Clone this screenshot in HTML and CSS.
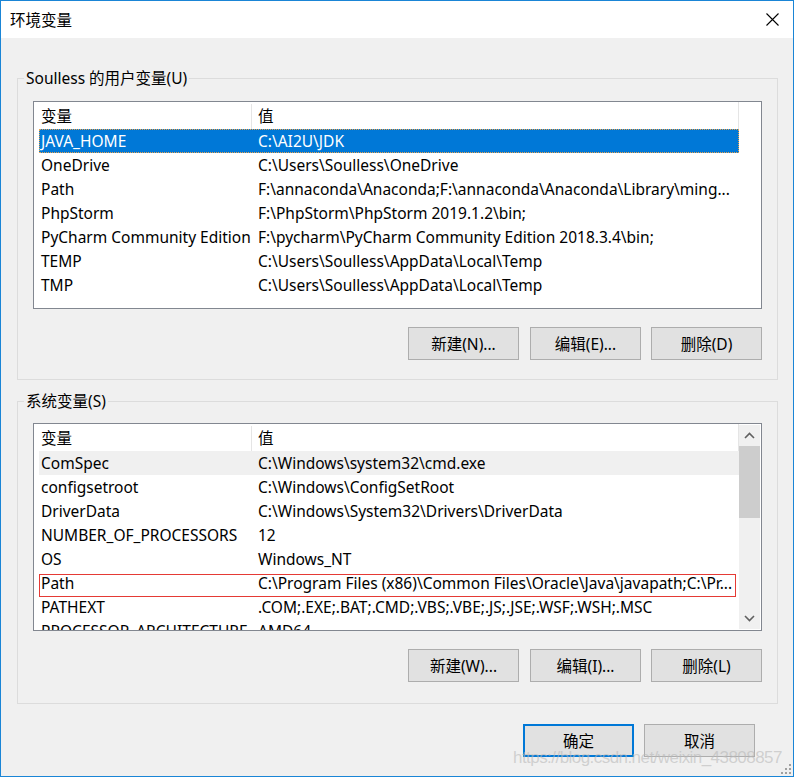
FILE: index.html
```html
<!DOCTYPE html>
<html lang="zh-CN">
<head>
    <meta charset="UTF-8">
    <title>环境变量</title>
    <link rel="stylesheet" href="styles.css">
</head>
<body>
<div class="window">
    <div class="titlebar">
        <span class="title">环境变量</span>
        <svg class="close" width="13" height="13" viewBox="0 0 13 13">
            <path d="M0.5 0.5 L12.5 12.5 M12.5 0.5 L0.5 12.5" stroke="#000" stroke-width="1.1" fill="none"/>
        </svg>
    </div>

    <div class="content">
        <fieldset class="group group-user">
            <legend>Soulless 的用户变量(U)</legend>
            <div class="list">
                <div class="rows">
                    <div class="row head"><span>变量</span><span>值</span></div>
                    <div class="row selected"><span>JAVA_HOME</span><span>C:\AI2U\JDK</span></div>
                    <div class="row"><span>OneDrive</span><span>C:\Users\Soulless\OneDrive</span></div>
                    <div class="row"><span>Path</span><span>F:\annaconda\Anaconda;F:\annaconda\Anaconda\Library\ming...</span></div>
                    <div class="row"><span>PhpStorm</span><span>F:\PhpStorm\PhpStorm 2019.1.2\bin;</span></div>
                    <div class="row"><span>PyCharm Community Edition</span><span>F:\pycharm\PyCharm Community Edition 2018.3.4\bin;</span></div>
                    <div class="row"><span>TEMP</span><span>C:\Users\Soulless\AppData\Local\Temp</span></div>
                    <div class="row"><span>TMP</span><span>C:\Users\Soulless\AppData\Local\Temp</span></div>
                </div>
            </div>
            <div class="actions">
                <button>新建(N)...</button>
                <button>编辑(E)...</button>
                <button>删除(D)</button>
            </div>
        </fieldset>

        <fieldset class="group group-system">
            <legend>系统变量(S)</legend>
            <div class="list">
                <div class="rows">
                    <div class="row head"><span>变量</span><span>值</span></div>
                    <div class="row hover"><span>ComSpec</span><span>C:\Windows\system32\cmd.exe</span></div>
                    <div class="row"><span>configsetroot</span><span>C:\Windows\ConfigSetRoot</span></div>
                    <div class="row"><span>DriverData</span><span>C:\Windows\System32\Drivers\DriverData</span></div>
                    <div class="row"><span>NUMBER_OF_PROCESSORS</span><span>12</span></div>
                    <div class="row"><span>OS</span><span>Windows_NT</span></div>
                    <div class="row marked"><span>Path</span><span>C:\Program Files (x86)\Common Files\Oracle\Java\javapath;C:\Pr...</span></div>
                    <div class="row"><span>PATHEXT</span><span>.COM;.EXE;.BAT;.CMD;.VBS;.VBE;.JS;.JSE;.WSF;.WSH;.MSC</span></div>
                    <div class="row"><span>PROCESSOR_ARCHITECTURE</span><span>AMD64</span></div>
                </div>
                <div class="scrollbar">
                    <div class="arrow">
                        <svg width="11" height="7" viewBox="0 0 11 7"><path d="M1 6 L5.5 1.5 L10 6" stroke="#606060" stroke-width="1.6" fill="none"/></svg>
                    </div>
                    <div class="thumb"></div>
                    <div class="track"></div>
                    <div class="arrow">
                        <svg width="11" height="7" viewBox="0 0 11 7"><path d="M1 1 L5.5 5.5 L10 1" stroke="#606060" stroke-width="1.6" fill="none"/></svg>
                    </div>
                </div>
            </div>
            <div class="actions">
                <button>新建(W)...</button>
                <button>编辑(I)...</button>
                <button>删除(L)</button>
            </div>
        </fieldset>

        <div class="footer">
            <button class="default">确定</button>
            <button>取消</button>
        </div>
    </div>

    <div class="watermark">https://blog.csdn.net/weixin_43808857</div>
    <svg class="grip" width="10" height="10" viewBox="0 0 10 10">
        <rect x="8" y="0" width="2" height="2" fill="#a0a0a0"/>
        <rect x="4" y="4" width="2" height="2" fill="#a0a0a0"/>
        <rect x="8" y="4" width="2" height="2" fill="#a0a0a0"/>
        <rect x="0" y="8" width="2" height="2" fill="#a0a0a0"/>
        <rect x="4" y="8" width="2" height="2" fill="#a0a0a0"/>
        <rect x="8" y="8" width="2" height="2" fill="#a0a0a0"/>
    </svg>
</div>
</body>
</html>
```

FILE: styles.css
```css
body {
    margin: 0;
    font-family: "Noto Sans", "Noto Sans CJK SC", sans-serif;
    font-size: 15.5px;
    color: #000;
    background-color: #f0f0f0;
}
.window {
    position: relative;
    width: 794px;
    height: 777px;
    box-sizing: border-box;
    border: 1px solid #1a85d6;
    background-color: #f0f0f0;
    overflow: hidden;
}
.titlebar {
    height: 37px;
    background-color: #fff;
    display: flex;
    align-items: center;
    justify-content: space-between;
    padding: 0 14px 0 9px;
}
.title {
    line-height: 20px;
}
.close {
    display: block;
}

.content {
    padding: 0 15px 0 16px;
}
.group {
    margin: 0;
    border: 1px solid #dcdcdc;
    padding: 13px 15px 19px 15px;
}
.group legend {
    line-height: 20px;
    padding: 0 2px;
    margin-left: -9px;
}
.group-user {
    margin-top: 30px;
}
.group-system {
    margin-top: 11px;
    padding-top: 12px;
    padding-bottom: 21px;
}

/* list view */
.list {
    display: flex;
    height: 208px;
    box-sizing: border-box;
    border: 1px solid #828790;
    background-color: #fff;
    overflow: hidden;
}
.rows {
    flex: none;
    width: 700px;
    margin-left: 5px;
}
.row {
    display: grid;
    grid-template-columns: 212px 1fr;
    height: 24px;
    line-height: 24px;
    white-space: nowrap;
}
.row span {
    overflow: hidden;
    padding-left: 2px;
}
.row span + span {
    padding-left: 7px;
}
.row.head {
    height: 27px;
    line-height: 25px;
    box-sizing: border-box;
    padding-top: 2px;
    border-right: 1px solid #e5e5e5;
}
.row.head span + span {
    border-left: 1px solid #e5e5e5;
    padding-left: 6px;
}
.row.selected {
    background-color: #0078d7;
    color: #fff;
    outline: 1px dotted #e9a24c;
    outline-offset: -1px;
}
.row.hover {
    background-color: #f0f0f0;
}
.row.marked {
    position: relative;
}
.row.marked::after {
    content: "";
    position: absolute;
    top: 3px;
    left: 0;
    right: 3px;
    height: 21px;
    border: 1px solid #e53a35;
}

.scrollbar {
    width: 21px;
    margin: 1px 1px 1px 0;
    background-color: #f0f0f0;
    display: flex;
    flex-direction: column;
}
.scrollbar .arrow {
    height: 21px;
    display: flex;
    align-items: center;
    justify-content: center;
}
.scrollbar .thumb {
    height: 72px;
    background-color: #cdcdcd;
}
.scrollbar .track {
    flex: 1;
}

/* buttons */
.actions {
    display: flex;
    justify-content: flex-end;
    gap: 10px;
    margin-top: 18px;
}
.actions button:first-child {
    margin-right: 1px;
}
button {
    width: 111px;
    height: 33px;
    box-sizing: border-box;
    border: 1px solid #adadad;
    background-color: #e1e1e1;
    font-family: inherit;
    font-size: 15.5px;
    color: #000;
    padding: 0;
}
.footer {
    display: flex;
    justify-content: flex-end;
    gap: 10px;
    margin-top: 20px;
    padding-right: 23px;
}
button.default {
    border: 2px solid #0078d7;
}

.watermark {
    position: absolute;
    left: 512px;
    top: 747px;
    font-family: "Liberation Sans", sans-serif;
    font-size: 17px;
    letter-spacing: -0.55px;
    color: rgba(185, 185, 185, 0.6);
    white-space: nowrap;
}
.grip {
    position: absolute;
    right: 2px;
    bottom: 2px;
}
```
